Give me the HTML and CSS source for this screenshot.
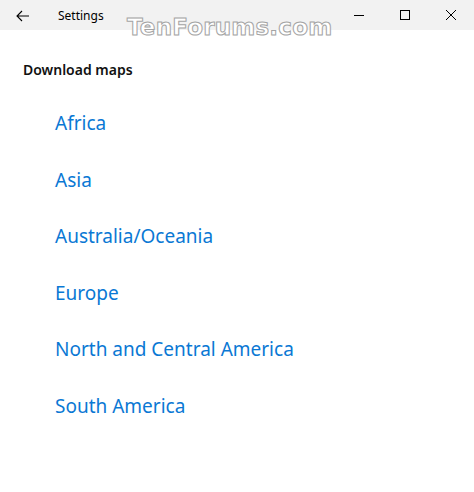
FILE: index.html
```html
<!DOCTYPE html>
<html>
<head>
<meta charset="utf-8">
<link rel="stylesheet" href="styles.css">
</head>
<body>
<div class="window">
  <div class="titlebar">
    <div class="back">
      <svg width="14" height="12" viewBox="0 0 14 12"><path d="M6 1 L1 6 L6 11 M1 6 H13" fill="none" stroke="#000" stroke-width="1.1"/></svg>
    </div>
    <div class="title">Settings</div>
    <div class="controls">
      <div class="ctl"><svg width="12" height="12" viewBox="0 0 12 12"><path d="M1 6.5 H11" stroke="#000" stroke-width="1"/></svg></div>
      <div class="ctl"><svg width="12" height="12" viewBox="0 0 12 12"><rect x="1.5" y="1.5" width="9" height="9" fill="none" stroke="#000" stroke-width="1"/></svg></div>
      <div class="ctl"><svg width="12" height="12" viewBox="0 0 12 12"><path d="M1 1 L11 11 M11 1 L1 11" stroke="#000" stroke-width="1"/></svg></div>
    </div>
    <div class="watermark">TenForums.com</div>
  </div>
  <div class="content">
    <div class="heading">Download maps</div>
    <ul class="regions">
      <li><a>Africa</a></li>
      <li><a>Asia</a></li>
      <li><a>Australia/Oceania</a></li>
      <li><a>Europe</a></li>
      <li><a>North and Central America</a></li>
      <li><a>South America</a></li>
    </ul>
  </div>
</div>
</body>
</html>
```
FILE: styles.css
```css
html, body {
  margin: 0;
  padding: 0;
  background: #fff;
}
.window {
  width: 474px;
  height: 492px;
  font-family: "Noto Sans", "Open Sans", sans-serif;
  position: relative;
  overflow: hidden;
}
.titlebar {
  height: 30px;
  background: #f2f2f2;
  display: flex;
  align-items: center;
  position: relative;
}
.back {
  width: 46px;
  display: flex;
  justify-content: center;
  padding-top: 1px;
}
.title {
  font-size: 12px;
  color: #000;
  margin-left: 12px;
  font-family: "Noto Sans", sans-serif;
}
.controls {
  margin-left: auto;
  display: flex;
}
.ctl {
  width: 46px;
  height: 30px;
  display: flex;
  align-items: center;
  justify-content: center;
}
.watermark {
  position: absolute;
  left: 127px;
  top: 14px;
  font-family: "DejaVu Sans", sans-serif;
  font-weight: bold;
  font-size: 23px;
  letter-spacing: 0.2px;
  color: #fff;
  -webkit-text-stroke: 1px #a4a4a4;
  line-height: 26px;
  white-space: nowrap;
}
.content {
  padding-left: 23px;
}
.heading {
  margin-top: 30px;
  font-size: 14px;
  font-weight: 600;
  line-height: 20px;
  color: #111;
}
.regions {
  list-style: none;
  margin: 15px 0 0 0;
  padding: 0 0 0 32px;
}
.regions li {
  height: 56.5px;
  line-height: 56.5px;
  font-size: 19px;
  color: #0a78d4;
  white-space: nowrap;
}
```
